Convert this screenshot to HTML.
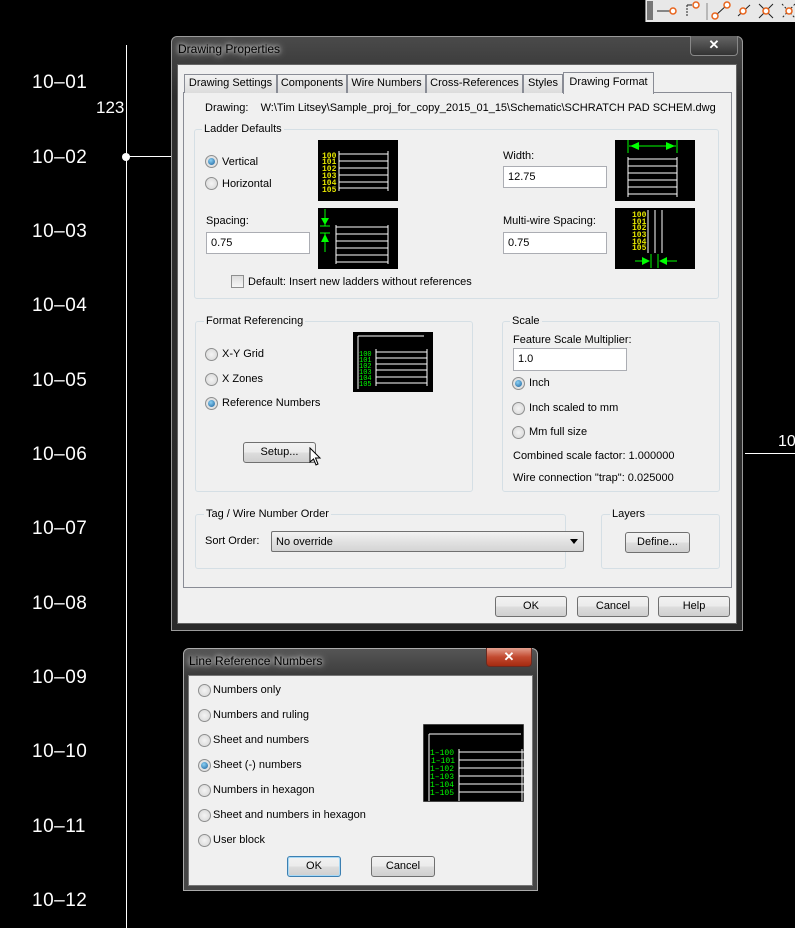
<!DOCTYPE html>
<html><head><meta charset="utf-8"><style>
*{margin:0;padding:0;box-sizing:border-box}
body{width:795px;height:928px;background:#000;position:relative;overflow:hidden;font-family:"Liberation Sans",sans-serif;font-size:11px;color:#000}
.a{position:absolute}
.lbl{position:absolute;color:#fff;font-size:19px;left:32px;letter-spacing:0.5px;font-weight:300}
.t{position:absolute;white-space:nowrap;font-size:11px;line-height:14px}
.grp{position:absolute;border:1px solid #d5dfe5;border-radius:3px}
.gl{position:absolute;top:-8px;left:8px;background:#f0f0f0;padding:0 2px;font-size:11px;line-height:14px;white-space:nowrap}
.rad{position:absolute;width:13px;height:13px;border-radius:50%;border:1px solid #8e8f8f;background:radial-gradient(circle,#f4f4f4,#d5d5d5)}
.rad.on::after{content:"";position:absolute;left:2px;top:2px;width:7px;height:7px;border-radius:50%;background:radial-gradient(circle at 40% 35%,#8ad0f4,#1a5f9a)}
.inp{position:absolute;background:#fff;border:1px solid #abadb3;padding:3px 4px;font-size:11px;line-height:14px}
.btn{position:absolute;border:1px solid #707070;border-radius:3px;background:linear-gradient(#f2f2f2,#ebebeb 50%,#dddddd 51%,#cfcfcf);text-align:center;font-size:11px;line-height:18px}
.tab{position:absolute;top:74px;height:19px;border:1px solid #898c95;border-bottom:none;background:linear-gradient(#f2f2f2,#dcdcdc);font-size:11px;line-height:17px;text-align:center;white-space:nowrap}
</style></head><body>

<div class="a" style="left:126px;top:45px;width:1px;height:883px;background:#fff"></div>
<div class="a" style="left:126px;top:156px;width:45px;height:1px;background:#fff"></div>
<div class="a" style="left:122px;top:153px;width:8px;height:8px;border-radius:50%;background:#fff"></div>
<div class="a" style="left:745px;top:453px;width:50px;height:1px;background:#fff"></div>
<div class="a" style="left:778px;top:433px;color:#fff;font-size:16px">10</div>
<div class="a" style="left:96px;top:98px;color:#fff;font-size:17px;font-weight:300">123</div>
<div class="lbl" style="top:72px">10–01</div>
<div class="lbl" style="top:147px">10–02</div>
<div class="lbl" style="top:221px">10–03</div>
<div class="lbl" style="top:295px">10–04</div>
<div class="lbl" style="top:370px">10–05</div>
<div class="lbl" style="top:444px">10–06</div>
<div class="lbl" style="top:518px">10–07</div>
<div class="lbl" style="top:593px">10–08</div>
<div class="lbl" style="top:667px">10–09</div>
<div class="lbl" style="top:741px">10–10</div>
<div class="lbl" style="top:816px">10–11</div>
<div class="lbl" style="top:890px">10–12</div>

<div class="a" style="left:645px;top:0;width:150px;height:22px;background:#e8e8e8;border-left:1px solid #888"></div>
<svg class="a" style="left:645px;top:0" width="150" height="22">
<rect x="2" y="1" width="6" height="19" fill="#777"/>
<g stroke="#222" fill="none"><line x1="12" y1="11" x2="25" y2="11"/><line x1="42" y1="5" x2="47" y2="5"/><line x1="42" y1="5" x2="42" y2="16" stroke-dasharray="2 1"/><line x1="70" y1="16" x2="82" y2="5"/><line x1="93" y1="16" x2="105" y2="5"/><line x1="114" y1="4" x2="128" y2="18"/><line x1="128" y1="4" x2="114" y2="18"/><line x1="137" y1="4" x2="150" y2="18" stroke-dasharray="2 2"/><line x1="150" y1="4" x2="137" y2="18" stroke-dasharray="2 2"/><line x1="62" y1="3" x2="62" y2="20" stroke="#888"/></g>
<g fill="#fff" stroke="#e8641c" stroke-width="1.5"><circle cx="28" cy="11" r="3"/><circle cx="51" cy="5" r="3"/><circle cx="70" cy="16" r="3"/><circle cx="82" cy="5" r="3"/><circle cx="98" cy="11" r="3"/><circle cx="121" cy="11" r="3"/><circle cx="144" cy="11" r="3"/></g>
</svg>

<div class="a" style="left:171px;top:36px;width:572px;height:595px;background:linear-gradient(#4a4a4a,#2e2e2e 10%,#2a2a2a);border:1px solid #9a9a9a;border-radius:6px 6px 0 0"></div>
<div class="a" style="left:178px;top:42px;color:#000;font-size:12px;text-shadow:0 0 8px #ddd,0 0 4px #fff">Drawing Properties</div>
<div class="a" style="left:690px;top:36px;width:48px;height:20px;border:1px solid #888;border-top:none;border-radius:0 0 4px 4px;background:linear-gradient(#666,#333);color:#fff;font-weight:bold;text-align:center;line-height:18px;font-size:13px">✕</div>
<div class="a" style="left:177px;top:64px;width:560px;height:560px;background:#f0f0f0;border:1px solid #666"></div>
<div class="a" style="left:183px;top:92px;width:549px;height:496px;background:#fff;border:1px solid #898c95"></div>
<div class="a" style="left:184px;top:93px;width:547px;height:494px;background:#f0f0f0"></div>
<div class="tab" style="left:184px;width:93px">Drawing Settings</div>
<div class="tab" style="left:277px;width:70px">Components</div>
<div class="tab" style="left:347px;width:79px">Wire Numbers</div>
<div class="tab" style="left:426px;width:97px">Cross-References</div>
<div class="tab" style="left:523px;width:40px">Styles</div>
<div class="tab" style="left:563px;top:72px;height:22px;width:91px;background:#f0f0f0;line-height:18px">Drawing Format</div>

<div class="t" style="left:205px;top:101px">Drawing:&nbsp;&nbsp;&nbsp; W:\Tim Litsey\Sample_proj_for_copy_2015_01_15\Schematic\SCHRATCH PAD SCHEM.dwg</div>

<div class="grp" style="left:194px;top:129px;width:525px;height:170px"><div class="gl" style="left:7px">Ladder Defaults</div></div>
<div class="rad on" style="left:205px;top:155px"></div><div class="t" style="left:222px;top:155px">Vertical</div>
<div class="rad" style="left:205px;top:177px"></div><div class="t" style="left:222px;top:177px">Horizontal</div>
<div class="t" style="left:503px;top:149px">Width:</div>
<div class="inp" style="left:503px;top:166px;width:104px;height:22px">12.75</div>
<div class="t" style="left:206px;top:214px">Spacing:</div>
<div class="inp" style="left:206px;top:232px;width:104px;height:22px">0.75</div>
<div class="t" style="left:503px;top:214px">Multi-wire Spacing:</div>
<div class="inp" style="left:503px;top:232px;width:104px;height:22px">0.75</div>
<div class="a" style="left:231px;top:275px;width:13px;height:13px;border:1px solid #8e8f8f;background:linear-gradient(#ddd,#f6f6f6)"></div>
<div class="t" style="left:248px;top:275px">Default: Insert new ladders without references</div>

<svg class="a" style="left:318px;top:140px" width="80" height="61"><rect width="80" height="61" fill="#000"/>
<g stroke="#fff"><line x1="21" y1="14" x2="70" y2="14"/><line x1="21" y1="21" x2="70" y2="21"/><line x1="21" y1="28" x2="70" y2="28"/><line x1="21" y1="35" x2="70" y2="35"/><line x1="21" y1="42" x2="70" y2="42"/><line x1="21" y1="48" x2="70" y2="48"/><line x1="21" y1="11" x2="21" y2="51"/><line x1="70" y1="11" x2="70" y2="51"/></g>
<g fill="#e6e600" font-family="Liberation Mono,monospace" font-size="8" font-weight="bold"><text x="4" y="18">100</text><text x="4" y="24">101</text><text x="4" y="31">102</text><text x="4" y="38">103</text><text x="4" y="45">104</text><text x="4" y="52">105</text></g></svg>

<svg class="a" style="left:318px;top:208px" width="80" height="61"><rect width="80" height="61" fill="#000"/>
<g stroke="#fff"><line x1="18" y1="19" x2="70" y2="19"/><line x1="18" y1="26" x2="70" y2="26"/><line x1="18" y1="33" x2="70" y2="33"/><line x1="18" y1="40" x2="70" y2="40"/><line x1="18" y1="47" x2="70" y2="47"/><line x1="18" y1="54" x2="70" y2="54"/><line x1="18" y1="17" x2="18" y2="56"/><line x1="70" y1="17" x2="70" y2="56"/></g>
<g stroke="#0f0"><line x1="7" y1="1" x2="7" y2="18"/><line x1="2" y1="18" x2="12" y2="18"/><line x1="2" y1="25" x2="12" y2="25"/><line x1="7" y1="25" x2="7" y2="44"/></g>
<g fill="#0f0"><polygon points="3,10 11,10 7,17"/><polygon points="3,34 11,34 7,26"/></g></svg>

<svg class="a" style="left:615px;top:140px" width="80" height="61"><rect width="80" height="61" fill="#000"/>
<g stroke="#fff"><line x1="13" y1="19" x2="62" y2="19"/><line x1="13" y1="26" x2="62" y2="26"/><line x1="13" y1="33" x2="62" y2="33"/><line x1="13" y1="40" x2="62" y2="40"/><line x1="13" y1="47" x2="62" y2="47"/><line x1="13" y1="54" x2="62" y2="54"/><line x1="13" y1="17" x2="13" y2="57"/><line x1="62" y1="17" x2="62" y2="57"/></g>
<g stroke="#0f0"><line x1="13" y1="0" x2="13" y2="13"/><line x1="62" y1="0" x2="62" y2="13"/><line x1="14" y1="6" x2="61" y2="6"/></g>
<g fill="#0f0"><polygon points="15,6 24,2 24,10"/><polygon points="60,6 51,2 51,10"/></g></svg>

<svg class="a" style="left:615px;top:208px" width="80" height="61"><rect width="80" height="61" fill="#000"/>
<g stroke="#fff"><line x1="33" y1="2" x2="33" y2="45"/><line x1="40" y1="2" x2="40" y2="45"/><line x1="47" y1="2" x2="47" y2="45"/></g>
<g fill="#e6e600" font-family="Liberation Mono,monospace" font-size="8" font-weight="bold"><text x="17" y="9">100</text><text x="17" y="16">101</text><text x="17" y="22">102</text><text x="17" y="29">103</text><text x="17" y="36">104</text><text x="17" y="42">105</text></g>
<g stroke="#0f0"><line x1="20" y1="53" x2="32" y2="53"/><line x1="48" y1="53" x2="62" y2="53"/><line x1="36" y1="46" x2="36" y2="60"/><line x1="43" y1="46" x2="43" y2="60"/></g>
<g fill="#0f0"><polygon points="35,53 27,49 27,57"/><polygon points="44,53 52,49 52,57"/></g></svg>

<div class="grp" style="left:195px;top:321px;width:278px;height:171px"><div class="gl">Format Referencing</div></div>
<div class="rad" style="left:205px;top:348px"></div><div class="t" style="left:222px;top:347px">X-Y Grid</div>
<div class="rad" style="left:205px;top:373px"></div><div class="t" style="left:222px;top:372px">X Zones</div>
<div class="rad on" style="left:205px;top:397px"></div><div class="t" style="left:222px;top:396px">Reference Numbers</div>
<div class="btn" style="left:243px;top:442px;width:73px;height:21px">Setup...</div>
<svg class="a" style="left:309px;top:447px" width="14" height="20"><path d="M1 1 L1 15 L4.5 12 L7 18 L9 17 L6.5 11 L11 11 Z" fill="#fff" stroke="#000"/></svg>
<svg class="a" style="left:353px;top:332px" width="80" height="60"><rect width="80" height="60" fill="#000"/>
<g stroke="#fff"><line x1="5" y1="4" x2="71" y2="4"/><line x1="5" y1="4" x2="5" y2="57"/><line x1="23" y1="20" x2="74" y2="20"/><line x1="23" y1="26" x2="74" y2="26"/><line x1="23" y1="32" x2="74" y2="32"/><line x1="23" y1="38" x2="74" y2="38"/><line x1="23" y1="45" x2="74" y2="45"/><line x1="23" y1="51" x2="74" y2="51"/><line x1="23" y1="17" x2="23" y2="54"/><line x1="74" y1="17" x2="74" y2="54"/></g>
<g fill="#0f0" font-family="Liberation Mono,monospace" font-size="7"><text x="6" y="24">100</text><text x="6" y="30">101</text><text x="6" y="36">102</text><text x="6" y="42">103</text><text x="6" y="48">104</text><text x="6" y="54">105</text></g></svg>

<div class="grp" style="left:502px;top:321px;width:218px;height:171px"><div class="gl" style="left:7px">Scale</div></div>
<div class="t" style="left:513px;top:333px">Feature Scale Multiplier:</div>
<div class="inp" style="left:513px;top:348px;width:114px;height:23px">1.0</div>
<div class="rad on" style="left:512px;top:377px"></div><div class="t" style="left:529px;top:376px">Inch</div>
<div class="rad" style="left:512px;top:402px"></div><div class="t" style="left:529px;top:401px">Inch scaled to mm</div>
<div class="rad" style="left:512px;top:426px"></div><div class="t" style="left:529px;top:425px">Mm full size</div>
<div class="t" style="left:513px;top:449px">Combined scale factor: 1.000000</div>
<div class="t" style="left:513px;top:471px">Wire connection "trap": 0.025000</div>

<div class="grp" style="left:195px;top:514px;width:371px;height:55px"><div class="gl">Tag / Wire Number Order</div></div>
<div class="t" style="left:205px;top:534px">Sort Order:</div>
<div class="a" style="left:271px;top:531px;width:313px;height:21px;border:1px solid #707070;border-radius:2px;background:linear-gradient(#f2f2f2,#e2e2e2 50%,#d4d4d4);padding:3px 4px;font-size:11px;line-height:14px">No override<span style="position:absolute;right:5px;top:7px;border:4px solid transparent;border-top:5px solid #000;border-bottom:none"></span></div>
<div class="grp" style="left:601px;top:514px;width:119px;height:55px"><div class="gl">Layers</div></div>
<div class="btn" style="left:625px;top:532px;width:65px;height:21px">Define...</div>

<div class="btn" style="left:495px;top:596px;width:72px;height:21px">OK</div>
<div class="btn" style="left:577px;top:596px;width:72px;height:21px">Cancel</div>
<div class="btn" style="left:658px;top:596px;width:72px;height:21px">Help</div>

<div class="a" style="left:183px;top:648px;width:355px;height:243px;background:linear-gradient(#555,#3a3a3a 12%,#474747);border:1px solid #aaa;border-radius:6px 6px 0 0"></div>
<div class="a" style="left:189px;top:654px;font-size:12px;color:#000;text-shadow:0 0 8px #ddd,0 0 4px #fff">Line Reference Numbers</div>
<div class="a" style="left:486px;top:648px;width:46px;height:19px;border:1px solid #6b2a20;border-top:none;border-radius:0 0 4px 4px;background:linear-gradient(#e4a08f,#c24a30 50%,#a52a10);color:#fff;font-weight:bold;text-align:center;line-height:17px;font-size:13px">✕</div>
<div class="a" style="left:188px;top:675px;width:345px;height:211px;background:#f0f0f0;border:1px solid #777"></div>
<div class="rad" style="left:198px;top:684px"></div><div class="t" style="left:213px;top:683px">Numbers only</div>
<div class="rad" style="left:198px;top:709px"></div><div class="t" style="left:213px;top:708px">Numbers and ruling</div>
<div class="rad" style="left:198px;top:734px"></div><div class="t" style="left:213px;top:733px">Sheet and numbers</div>
<div class="rad on" style="left:198px;top:759px"></div><div class="t" style="left:213px;top:758px">Sheet (-) numbers</div>
<div class="rad" style="left:198px;top:784px"></div><div class="t" style="left:213px;top:783px">Numbers in hexagon</div>
<div class="rad" style="left:198px;top:809px"></div><div class="t" style="left:213px;top:808px">Sheet and numbers in hexagon</div>
<div class="rad" style="left:198px;top:834px"></div><div class="t" style="left:213px;top:833px">User block</div>
<svg class="a" style="left:423px;top:724px" width="101" height="78"><rect width="101" height="78" fill="#000" stroke="#888"/>
<g stroke="#fff"><line x1="6" y1="10" x2="98" y2="10"/><line x1="6" y1="10" x2="6" y2="77"/><line x1="36" y1="28" x2="101" y2="28"/><line x1="36" y1="36" x2="101" y2="36"/><line x1="36" y1="44" x2="101" y2="44"/><line x1="36" y1="52" x2="101" y2="52"/><line x1="36" y1="60" x2="101" y2="60"/><line x1="36" y1="68" x2="101" y2="68"/><line x1="36" y1="25" x2="36" y2="77"/><line x1="99" y1="25" x2="99" y2="77"/></g>
<g fill="#0f0" font-family="Liberation Mono,monospace" font-size="8"><text x="7" y="31">1–100</text><text x="8" y="39">1–101</text><text x="7" y="47">1–102</text><text x="7" y="55">1–103</text><text x="7" y="63">1–104</text><text x="7" y="71">1–105</text></g></svg>
<div class="btn" style="left:287px;top:856px;width:54px;height:21px;border-color:#3c7fb1;box-shadow:inset 0 0 0 1px #a7d8f5">OK</div>
<div class="btn" style="left:371px;top:856px;width:64px;height:21px">Cancel</div>

</body></html>
